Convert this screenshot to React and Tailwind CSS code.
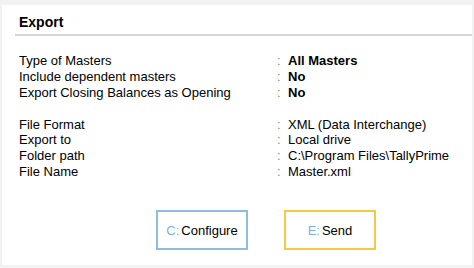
export default function App() {
  const general = [
    ["Type of Masters", "All Masters", true],
    ["Include dependent masters", "No", true],
    ["Export Closing Balances as Opening", "No", true],
  ];
  const file = [
    ["File Format", "XML (Data Interchange)"],
    ["Export to", "Local drive"],
    ["Folder path", "C:\\Program Files\\TallyPrime"],
    ["File Name", "Master.xml"],
  ];

  const Row = ({ label, value, bold }) => (
    <div className="flex h-[15.8px] items-center">
      <span className="w-[258px] shrink-0">{label}</span>
      <span className="w-[11px] shrink-0 text-[#888]">:</span>
      <span className={bold ? "font-bold" : ""}>{value}</span>
    </div>
  );

  return (
    <div
      className="h-[268px] w-[474px] bg-[#f2f2f2] pl-[2px] pr-[2px] pt-[5px] pb-[3px] text-[13px] text-black"
      style={{ fontFamily: '"Liberation Sans", Arial, sans-serif' }}
    >
      <div className="flex h-full flex-col bg-white pl-[13px]">
        <div className="border-b-2 border-[#d6d6d6] pl-[4px] pt-[10px] pb-[5px] text-[14px] font-bold leading-[14px]">
          Export
        </div>
        <div className="mt-[17px] pl-[4px] leading-[15px]">
          {general.map(([l, v, b]) => (
            <Row key={l} label={l} value={v} bold={b} />
          ))}
          <div className="h-[15.8px]" />
          {file.map(([l, v]) => (
            <Row key={l} label={l} value={v} />
          ))}
        </div>
        <div className="mt-[31px] flex gap-[36px] pl-[141px]">
          <div className="flex h-[40px] w-[92px] items-center justify-center border-2 border-[#8fbde0]">
            <span className="text-[#7fb2d9]">C:</span>
            <span className="ml-[2px]">Configure</span>
          </div>
          <div className="flex h-[40px] w-[92px] items-center justify-center border-2 border-[#f6c944]">
            <span className="text-[#7fb2d9]">E:</span>
            <span className="ml-[2px]">Send</span>
          </div>
        </div>
      </div>
    </div>
  );
}
